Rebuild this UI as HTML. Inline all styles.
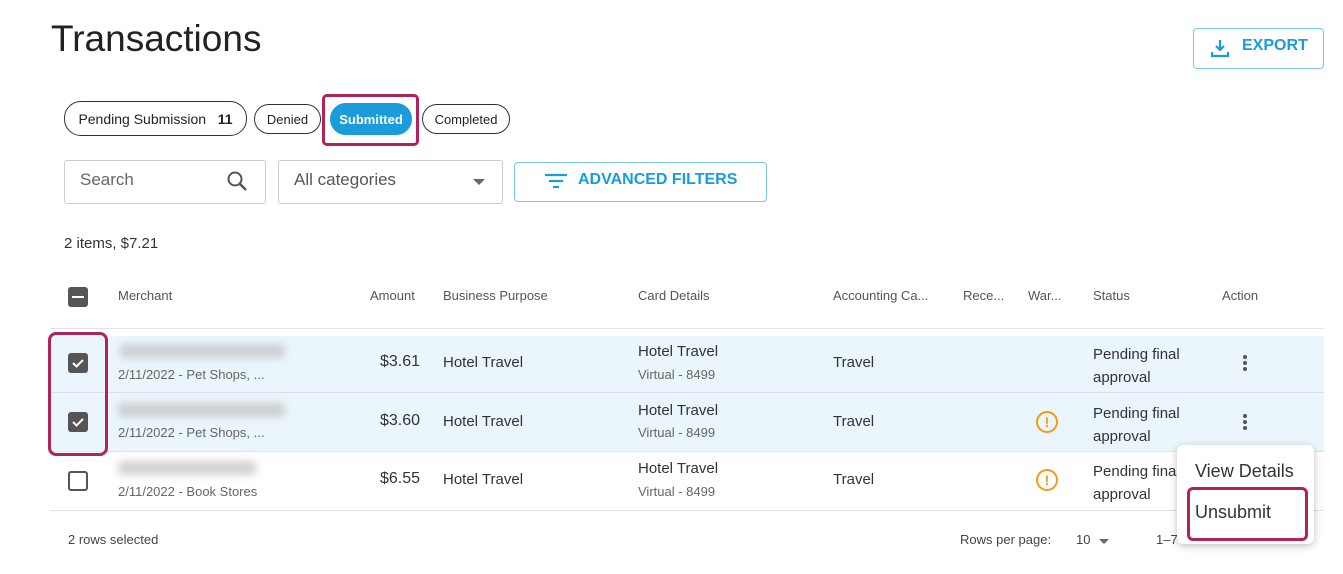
<!DOCTYPE html>
<html><head><meta charset="utf-8"><style>
*{margin:0;padding:0;box-sizing:border-box}
body{width:1343px;height:574px;background:#fff;font-family:"Liberation Sans",sans-serif;color:#333;position:relative;overflow:hidden}
.a{position:absolute;white-space:nowrap}
.chip{position:absolute;border:1px solid #333;border-radius:17px;font-size:13px;display:flex;align-items:center;justify-content:center;color:#222}
.h{font-size:13px;color:#555}
.t{font-size:15px;color:#333}
.s{font-size:13px;color:#666}
.cb{position:absolute;width:20px;height:20px;border-radius:3px;background:#555;left:68px}
.blur{position:absolute;height:14px;background:#c4c4c4;filter:blur(4px);border-radius:4px;opacity:.75}
.dots{position:absolute;left:1243px;width:4px}
.dots i{display:block;width:4px;height:4px;border-radius:2px;background:#555;margin-bottom:2px}
.warn{position:absolute;left:1036px;width:22px;height:22px;border:2px solid #f39c12;border-radius:50%;color:#f39c12;font-size:14px;font-weight:bold;text-align:center;line-height:18px}
</style></head><body>
<div class="a" style="left:51px;top:18px;font-size:37px;color:#222">Transactions</div>
<div class="a" style="left:1193px;top:28px;width:131px;height:41px;border:1px solid #7cc6ec;border-radius:4px"></div>
<svg class="a" style="left:1210px;top:38px" width="20" height="20" viewBox="0 0 20 20"><path d="M10 2v10M6 8l4 4 4-4M2 14v4h16v-4" fill="none" stroke="#1a9bdb" stroke-width="2.2"/></svg>
<div class="a" style="left:1242px;top:37px;font-size:16px;font-weight:bold;color:#1a9bdb">EXPORT</div>

<div class="chip" style="left:64px;top:101px;width:183px;height:35px;font-size:14px">Pending Submission&nbsp;&nbsp;&nbsp;<b>11</b></div>
<div class="chip" style="left:254px;top:104px;width:67px;height:30px">Denied</div>
<div class="a" style="left:322px;top:94px;width:97px;height:52px;border:3px solid #b0245a;border-radius:5px"></div>
<div class="chip" style="left:330px;top:103px;width:82px;height:32px;background:#1a9bdb;border-color:#1a9bdb;color:#fff;font-weight:bold">Submitted</div>
<div class="chip" style="left:422px;top:104px;width:88px;height:30px">Completed</div>

<div class="a" style="left:64px;top:160px;width:202px;height:44px;border:1px solid #ccc;border-radius:3px"></div>
<div class="a" style="left:80px;top:170px;font-size:17px;color:#666">Search</div>
<svg class="a" style="left:226px;top:170px" width="22" height="22" viewBox="0 0 22 22"><circle cx="9" cy="9" r="6.5" fill="none" stroke="#555" stroke-width="2"/><path d="M14 14l6 6" stroke="#555" stroke-width="2.4"/></svg>
<div class="a" style="left:278px;top:160px;width:225px;height:44px;border:1px solid #ccc;border-radius:3px"></div>
<div class="a" style="left:294px;top:170px;font-size:17px;color:#555">All categories</div>
<div class="a" style="left:473px;top:179px;border-left:6px solid transparent;border-right:6px solid transparent;border-top:6px solid #666"></div>
<div class="a" style="left:514px;top:162px;width:253px;height:40px;border:1px solid #7cc6ec;border-radius:4px"></div>
<svg class="a" style="left:545px;top:172px" width="22" height="18" viewBox="0 0 22 18"><path d="M0 3h22M4 9h14M8 15h6" stroke="#1a9bdb" stroke-width="2.2"/></svg>
<div class="a" style="left:578px;top:171px;font-size:16px;font-weight:bold;color:#1a9bdb">ADVANCED FILTERS</div>

<div class="a" style="left:64px;top:235px;font-size:15px;color:#333">2 items, $7.21</div>

<div class="cb" style="top:287px"><div style="position:absolute;left:4px;top:9px;width:12px;height:2px;background:#fff"></div></div>
<div class="a h" style="left:118px;top:288px">Merchant</div>
<div class="a h" style="left:370px;top:288px">Amount</div>
<div class="a h" style="left:443px;top:288px">Business Purpose</div>
<div class="a h" style="left:638px;top:288px">Card Details</div>
<div class="a h" style="left:833px;top:288px">Accounting Ca...</div>
<div class="a h" style="left:963px;top:288px">Rece...</div>
<div class="a h" style="left:1028px;top:288px">War...</div>
<div class="a h" style="left:1093px;top:288px">Status</div>
<div class="a h" style="left:1222px;top:288px">Action</div>
<div class="a" style="left:50px;top:328px;width:1274px;height:1px;background:#e3e3e3"></div>

<div class="a" style="left:50px;top:336px;width:1274px;height:115px;background:#eaf5fc"></div>
<div class="a" style="left:50px;top:392px;width:1274px;height:1px;background:#dde"></div>
<div class="a" style="left:50px;top:451px;width:1274px;height:1px;background:#e3e3e3"></div>
<div class="a" style="left:50px;top:510px;width:1274px;height:1px;background:#e3e3e3"></div>

<div class="cb" style="top:353px"><svg width="20" height="20"><path d="M5 10l3.5 3.5L15 7" fill="none" stroke="#fff" stroke-width="2"/></svg></div>
<div class="blur" style="left:120px;top:344px;width:165px"></div>
<div class="a s" style="left:118px;top:367px">2/11/2022 - Pet Shops, ...</div>
<div class="a t" style="left:380px;top:353px;font-size:16px">$3.61</div>
<div class="a t" style="left:443px;top:354px">Hotel Travel</div>
<div class="a t" style="left:638px;top:343px">Hotel Travel</div>
<div class="a s" style="left:638px;top:367px">Virtual - 8499</div>
<div class="a t" style="left:833px;top:354px">Travel</div>
<div class="a t" style="left:1093px;top:343px;line-height:23px">Pending final<br>approval</div>
<div class="dots" style="top:355px"><i></i><i></i><i></i></div>

<div class="cb" style="top:412px"><svg width="20" height="20"><path d="M5 10l3.5 3.5L15 7" fill="none" stroke="#fff" stroke-width="2"/></svg></div>
<div class="blur" style="left:118px;top:403px;width:167px"></div>
<div class="a s" style="left:118px;top:425px">2/11/2022 - Pet Shops, ...</div>
<div class="a t" style="left:380px;top:412px;font-size:16px">$3.60</div>
<div class="a t" style="left:443px;top:413px">Hotel Travel</div>
<div class="a t" style="left:638px;top:402px">Hotel Travel</div>
<div class="a s" style="left:638px;top:425px">Virtual - 8499</div>
<div class="a t" style="left:833px;top:413px">Travel</div>
<div class="warn" style="top:411px">!</div>
<div class="a t" style="left:1093px;top:402px;line-height:23px">Pending final<br>approval</div>
<div class="dots" style="top:414px"><i></i><i></i><i></i></div>
<div class="a" style="left:48px;top:332px;width:60px;height:124px;border:3px solid #b0245a;border-radius:8px"></div>

<div class="a" style="left:68px;top:471px;width:20px;height:20px;border:2px solid #555;border-radius:3px"></div>
<div class="blur" style="left:118px;top:461px;width:138px"></div>
<div class="a s" style="left:118px;top:484px">2/11/2022 - Book Stores</div>
<div class="a t" style="left:380px;top:470px;font-size:16px">$6.55</div>
<div class="a t" style="left:443px;top:471px">Hotel Travel</div>
<div class="a t" style="left:638px;top:460px">Hotel Travel</div>
<div class="a s" style="left:638px;top:484px">Virtual - 8499</div>
<div class="a t" style="left:833px;top:471px">Travel</div>
<div class="warn" style="top:469px">!</div>
<div class="a t" style="left:1093px;top:460px;line-height:23px">Pending final<br>approval</div>

<div class="a" style="left:68px;top:532px;font-size:13px;color:#444">2 rows selected</div>
<div class="a" style="left:960px;top:532px;font-size:13px;color:#444">Rows per page:</div>
<div class="a" style="left:1076px;top:532px;font-size:13px;color:#444">10</div>
<div class="a" style="left:1099px;top:539px;border-left:5px solid transparent;border-right:5px solid transparent;border-top:5px solid #666"></div>
<div class="a" style="left:1156px;top:532px;font-size:13px;color:#444">1–7</div>

<div class="a" style="left:1177px;top:445px;width:137px;height:99px;background:#fff;border-radius:6px;box-shadow:0 2px 8px rgba(0,0,0,.25)"></div>
<div class="a" style="left:1195px;top:461px;font-size:18px;color:#333">View Details</div>
<div class="a" style="left:1187px;top:487px;width:121px;height:54px;border:3px solid #b0245a;border-radius:6px"></div>
<div class="a" style="left:1195px;top:502px;font-size:18px;color:#333">Unsubmit</div>
</body></html>
